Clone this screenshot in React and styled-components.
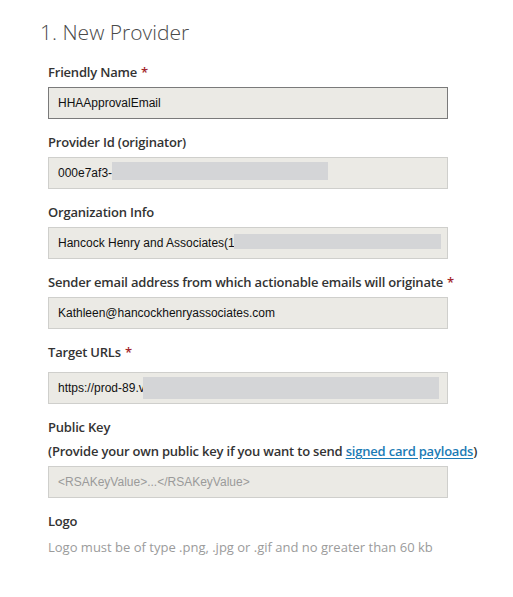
import * as React from 'react';
import styled, { createGlobalStyle } from 'styled-components';

const GlobalStyle = createGlobalStyle`
  body {
    margin: 0;
    background: #fff;
    font-family: "Open Sans", "Noto Sans", sans-serif;
  }
`;

const Page = styled.div`
  padding: 18px 0 0 40px;
  width: 513px;
  height: 597px;
  box-sizing: border-box;
  overflow: hidden;
`;

const Title = styled.h2`
  margin: 0 0 16px;
  font-size: 21px;
  font-weight: 300;
  line-height: 28px;
  color: #4a4a4a;
`;

const Form = styled.div`
  margin-left: 8px;
  width: 400px;
`;

const Field = styled.div`
  display: flex;
  flex-direction: column;
  margin-bottom: 13px;
`;

const Label = styled.label`
  font-size: 13px;
  font-weight: 600;
  letter-spacing: -0.2px;
  line-height: 20px;
  color: #333;
  margin-bottom: ${(p) => (p.$tight ? '4px' : '5px')};
  white-space: nowrap;
`;

const Required = styled.span`
  color: #a4262c;
  margin-left: 4px;
`;

const Help = styled.div`
  font-size: 13px;
  font-weight: 600;
  letter-spacing: -0.2px;
  line-height: 20px;
  color: #333;
  margin-bottom: 5px;
  white-space: nowrap;
`;

const Link = styled.a`
  color: #1b7bb5;
  text-decoration: underline;
  text-underline-offset: 2px;
`;

const Input = styled.div`
  position: relative;
  height: 32px;
  margin-top: ${(p) => (p.$spaced ? '5px' : '0')};
  box-sizing: border-box;
  background: #ebeae5;
  border: 1px solid ${(p) => (p.$active ? '#7a7a7a' : '#cfcfcc')};
  padding: 0 9px;
  display: flex;
  align-items: center;
  font-family: "Liberation Sans", Arial, sans-serif;
  font-size: 12px;
  color: ${(p) => (p.$placeholder ? '#9a9a9a' : '#111')};
  white-space: nowrap;
`;

const Redacted = styled.span`
  position: absolute;
  background: #d4d5d7;
`;

const Hint = styled.div`
  font-size: 13px;
  line-height: 20px;
  color: #9b9b9b;
  margin-top: 1px;
  white-space: nowrap;
`;

const fields = [
  { label: 'Friendly Name', required: true, value: 'HHAApprovalEmail', active: true },
  { label: 'Provider Id (originator)', value: '000e7af3-', redact: { left: 63, top: 4, width: 216, height: 18 } },
  { label: 'Organization Info', value: 'Hancock Henry and Associates(1', redact: { left: 185, top: 6, width: 207, height: 15 } },
  { label: 'Sender email address from which actionable emails will originate', required: true, value: 'Kathleen@hancockhenryassociates.com' },
  { label: 'Target URLs', required: true, value: 'https://prod-89.v', spaced: true, redact: { left: 94, top: 4, width: 296, height: 22 } },
];

export default function App() {
  return (
    <Page>
      <GlobalStyle />
      <Title>1. New Provider</Title>
      <Form>
        {fields.map((f) => (
          <Field key={f.label}>
            <Label>
              {f.label}
              {f.required && <Required>*</Required>}
            </Label>
            <Input $active={f.active} $spaced={f.spaced}>
              {f.value}
              {f.redact && <Redacted style={f.redact} />}
            </Input>
          </Field>
        ))}
        <Field>
          <Label $tight>Public Key</Label>
          <Help>
            (Provide your own public key if you want to send <Link href="#">signed card payloads</Link>)
          </Help>
          <Input $placeholder>&lt;RSAKeyValue&gt;...&lt;/RSAKeyValue&gt;</Input>
        </Field>
        <Field>
          <Label>Logo</Label>
          <Hint>Logo must be of type .png, .jpg or .gif and no greater than 60 kb</Hint>
        </Field>
      </Form>
    </Page>
  );
}
